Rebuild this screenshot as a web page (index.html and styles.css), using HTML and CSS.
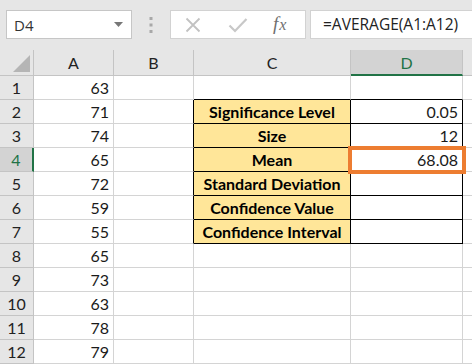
FILE: index.html
```html
<!DOCTYPE html>
<html>
<head>
<meta charset="utf-8">
<link rel="stylesheet" href="styles.css">
</head>
<body>
<div class="app">
  <div class="toolbar">
    <div class="namebox">
      <span class="nb-text">D4</span>
      <svg class="nb-arrow" width="9" height="5" viewBox="0 0 9 5"><path d="M0 0H9L4.5 5Z" fill="#777"/></svg>
    </div>
    <div class="dots">
      <svg width="4" height="16" viewBox="0 0 4 16"><rect x="0.5" y="0" width="3" height="3" fill="#a8a8a8"/><rect x="0.5" y="6.5" width="3" height="3" fill="#a8a8a8"/><rect x="0.5" y="13" width="3" height="3" fill="#a8a8a8"/></svg>
    </div>
    <div class="btns">
      <svg class="ic ic-x" width="16" height="16" viewBox="0 0 16 16"><path d="M1.5 1.5L14.5 14.5M14.5 1.5L1.5 14.5" stroke="#c2c2c2" stroke-width="1.8" fill="none"/></svg>
      <svg class="ic ic-check" width="20" height="16" viewBox="0 0 20 16"><path d="M1.5 8.5L7 14L18.5 2" stroke="#c8c8c8" stroke-width="2.2" fill="none"/></svg>
      <span class="fx"><i>f</i><i class="x">x</i></span>
    </div>
    <div class="formula">=AVERAGE(A1:A12)</div>
  </div>
  <div class="sheet">
    <div class="c hdr corner"><svg width="17" height="17" viewBox="0 0 17 17"><path d="M17 0V17H0Z" fill="#b5b5b5"/></svg></div>
    <div class="c hdr col">A</div>
    <div class="c hdr col">B</div>
    <div class="c hdr col">C</div>
    <div class="c hdr col sel">D</div>
    <div class="c hdr col last"></div>

    <div class="c hdr row">1</div><div class="c num">63</div><div class="c"></div><div class="c bb"></div><div class="c bb"></div><div class="c last"></div>
    <div class="c hdr row">2</div><div class="c num">71</div><div class="c br"></div><div class="c t lbl">Significance Level</div><div class="c t val">0.05</div><div class="c last"></div>
    <div class="c hdr row">3</div><div class="c num">74</div><div class="c br"></div><div class="c t lbl">Size</div><div class="c t val">12</div><div class="c last"></div>
    <div class="c hdr row selrow">4</div><div class="c num">65</div><div class="c br"></div><div class="c t lbl">Mean</div><div class="c t val active">68.08<span class="selbox"></span></div><div class="c last"></div>
    <div class="c hdr row">5</div><div class="c num">72</div><div class="c br"></div><div class="c t lbl">Standard Deviation</div><div class="c t val"></div><div class="c last"></div>
    <div class="c hdr row">6</div><div class="c num">59</div><div class="c br"></div><div class="c t lbl">Confidence Value</div><div class="c t val"></div><div class="c last"></div>
    <div class="c hdr row">7</div><div class="c num">55</div><div class="c br"></div><div class="c t lbl">Confidence Interval</div><div class="c t val"></div><div class="c last"></div>
    <div class="c hdr row">8</div><div class="c num">65</div><div class="c"></div><div class="c"></div><div class="c"></div><div class="c last"></div>
    <div class="c hdr row">9</div><div class="c num">73</div><div class="c"></div><div class="c"></div><div class="c"></div><div class="c last"></div>
    <div class="c hdr row">10</div><div class="c num">63</div><div class="c"></div><div class="c"></div><div class="c"></div><div class="c last"></div>
    <div class="c hdr row">11</div><div class="c num">78</div><div class="c"></div><div class="c"></div><div class="c"></div><div class="c last"></div>
    <div class="c hdr row">12</div><div class="c num">79</div><div class="c"></div><div class="c"></div><div class="c"></div><div class="c last"></div>
  </div>
</div>
</body>
</html>
```
FILE: styles.css
```css
html, body {
  margin: 0;
  padding: 0;
  background: #ffffff;
}
.app {
  width: 472px;
  height: 364px;
  overflow: hidden;
  font-family: Lato, "Open Sans", sans-serif;
  color: #1a1a1a;
}
.toolbar {
  height: 50px;
  background: #e6e6e6;
  display: flex;
  align-items: flex-start;
  padding-top: 10px;
  box-sizing: border-box;
}
.namebox {
  margin-left: 6px;
  width: 126px;
  height: 29px;
  box-sizing: border-box;
  background: #fff;
  border: 1px solid #c6c6c6;
  display: flex;
  align-items: center;
  justify-content: space-between;
  padding: 0 8px 0 7px;
}
.nb-text {
  font-family: "Open Sans", sans-serif;
  font-size: 15px;
  color: #333;
}
.dots {
  width: 38px;
  height: 29px;
  display: flex;
  align-items: center;
  justify-content: center;
}
.btns {
  width: 136px;
  height: 29px;
  box-sizing: border-box;
  background: #fff;
  border: 1px solid #d2d2d2;
  display: flex;
  align-items: center;
  padding-left: 14px;
}
.ic-x { margin-right: 27px; }
.ic-check { margin-right: 25px; }
.fx {
  font-family: "Liberation Serif", serif;
  font-size: 19px;
  color: #6f6f6f;
  font-style: italic;
  line-height: 1;
  margin-top: -2px;
}
.fx i { font-style: italic; }
.fx .x { font-size: 16px; margin-left: 1px; }
.formula {
  margin-left: 4px;
  flex: 1;
  height: 29px;
  box-sizing: border-box;
  background: #fff;
  border: 1px solid #d2d2d2;
  border-right: none;
  font-family: "Open Sans", sans-serif;
  font-size: 15.5px;
  line-height: 27px;
  padding-left: 12px;
  color: #222;
  white-space: nowrap;
}
.sheet {
  display: grid;
  grid-template-columns: 34px 80px 80px 157px 112px 1fr;
  grid-template-rows: 26px repeat(12, 24px);
}
.c {
  box-sizing: border-box;
  border-right: 1px solid #d4d4d4;
  border-bottom: 1px solid #d4d4d4;
  font-size: 16px;
  line-height: 23px;
  white-space: nowrap;
  overflow: visible;
}
.hdr {
  background: #e6e6e6;
  border-color: #c4c4c4;
  color: #222;
  text-align: center;
}
.corner {
  display: flex;
  align-items: flex-end;
  justify-content: flex-end;
  padding: 0 3px 3px 0;
}
.col {
  line-height: 25px;
  font-size: 16px;
}
.col.last { border-right: none; }
.col.sel {
  background: #d3d3d3;
  color: #217346;
  border-bottom: 2px solid #217346;
}
.row { font-size: 16px; }
.row.selrow {
  background: #d3d3d3;
  color: #217346;
  border-right: 2px solid #217346;
}
.num {
  text-align: right;
  padding-right: 4px;
}
.bb { border-bottom-color: #000; }
.br { border-right-color: #000; }
.t {
  border-right-color: #000;
  border-bottom-color: #000;
}
.lbl {
  background: #ffe699;
  font-weight: bold;
  text-align: center;
  color: #000;
}
.val {
  text-align: right;
  padding-right: 4px;
  color: #1a1a1a;
}
.active { position: relative; }
.selbox {
  position: absolute;
  top: -2px;
  bottom: -3px;
  left: -3px;
  right: -4px;
  border: 4px solid #ed7d31;
  z-index: 2;
}
.last { border-right: none; }
```
